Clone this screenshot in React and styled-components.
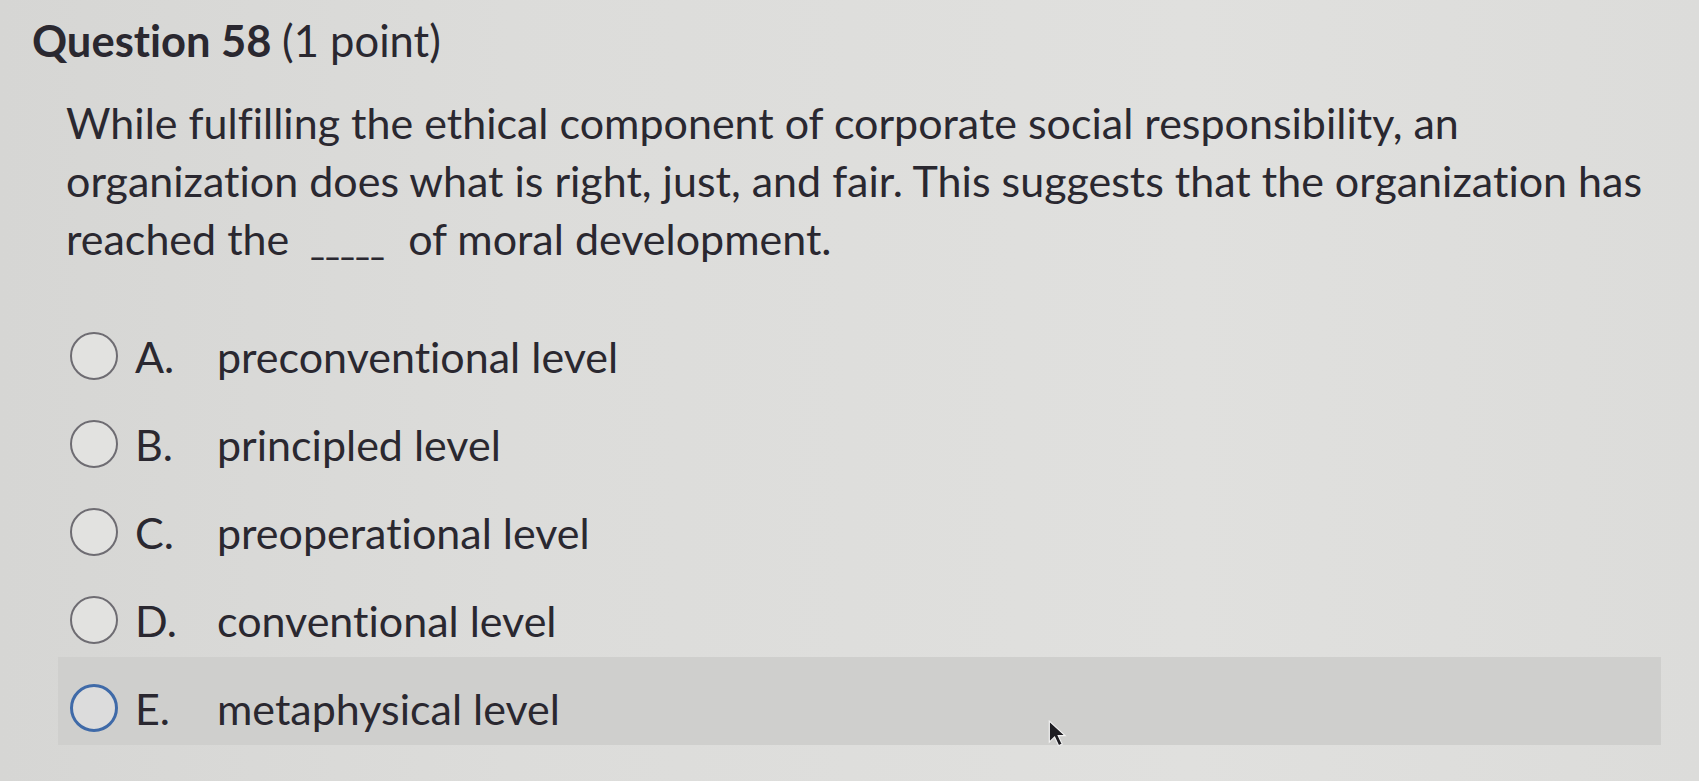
import React from "react";
import styled, { createGlobalStyle } from "styled-components";

const options = [
  { key: "A.", text: "preconventional level" },
  { key: "B.", text: "principled level" },
  { key: "C.", text: "preoperational level" },
  { key: "D.", text: "conventional level" },
  { key: "E.", text: "metaphysical level", focused: true },
];

const App = () => {
  return (
    <>
      <GlobalStyle />
      <Page>
        <Title>
          Question 58 <Points>(1 point)</Points>
        </Title>
        <Prompt>
          While fulfilling the ethical component of corporate social
          responsibility, an organization does what is right, just, and fair.
          This suggests that the organization has reached the <Blank>_____</Blank>{" "}
          of moral development.
        </Prompt>
        <OptionList>
          {options.map((o) => (
            <OptionRow key={o.key} $focused={o.focused}>
              <Radio $focused={o.focused} />
              <Letter>{o.key}</Letter>
              <OptionText>{o.text}</OptionText>
            </OptionRow>
          ))}
        </OptionList>
        <Cursor viewBox="0 0 16 24" width="19" height="28">
          <path
            d="M1 1 L1 19 L5.5 14.5 L9 22 L12 20.6 L8.6 13.4 L14.5 13.4 Z"
            fill="#1e1d22"
            stroke="#f2f2f2"
            strokeWidth="1"
          />
        </Cursor>
      </Page>
    </>
  );
};

export default App;

const GlobalStyle = createGlobalStyle`
    html, body {
        margin: 0;
        padding: 0;
    }
    body {
        background: linear-gradient(90deg, #d6d6d4 0%, #dcdcda 30%, #e0e0de 70%, #dcdcda 100%);
        font-family: Lato, "Open Sans", "Liberation Sans", sans-serif;
        font-variant-ligatures: none;
        color: #2a2830;
    }
`;

const Page = styled.main`
    position: relative;
    width: 1699px;
    height: 781px;
    overflow: hidden;
    padding: 14px 0 0 32px;
    box-sizing: border-box;
`;

const Title = styled.h1`
    margin: 0;
    font-size: 43.5px;
    line-height: 52px;
    font-weight: 700;
`;

const Points = styled.span`
    font-weight: 400;
`;

const Prompt = styled.p`
    margin: 28px 0 0 34px;
    max-width: 1610px;
    font-size: 43px;
    line-height: 58px;
    font-weight: 400;
`;

const Blank = styled.span`
    margin: 0 12px 0 10px;
    font-size: 31px;
    line-height: 0;
    font-weight: 700;
    letter-spacing: 0.5px;
`;

const OptionList = styled.div`
    margin: 37px 0 0 26px;
    width: 1603px;
    display: flex;
    flex-direction: column;
`;

const OptionRow = styled.div`
    display: flex;
    align-items: center;
    height: 88px;
    padding: 14px 0 0 12px;
    box-sizing: border-box;
    background: ${(p) => (p.$focused ? "#cfcfcd" : "transparent")};
`;

const Radio = styled.span`
    width: 48px;
    height: 48px;
    border-radius: 50%;
    box-sizing: border-box;
    border: ${(p) => (p.$focused ? "3px solid #3f6aa8" : "2px solid #6e6c72")};
    background: ${(p) => (p.$focused ? "#dcdcdc" : "#e2e2e0")};
    flex: none;
`;

const Letter = styled.span`
    width: 82px;
    margin-left: 17px;
    font-size: 43px;
    line-height: 1;
`;

const OptionText = styled.span`
    font-size: 43px;
    line-height: 1;
`;

const Cursor = styled.svg`
    position: absolute;
    left: 1048px;
    top: 720px;
`;
